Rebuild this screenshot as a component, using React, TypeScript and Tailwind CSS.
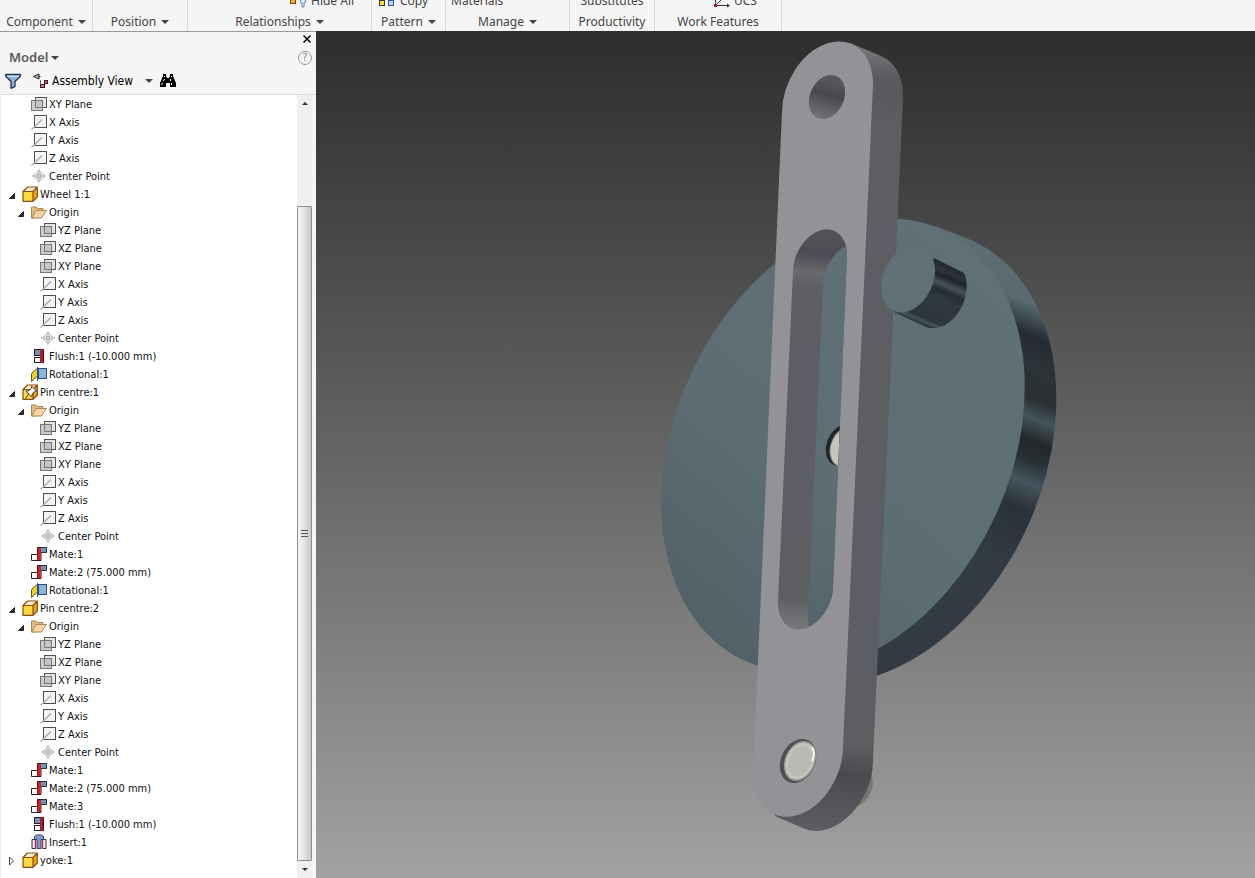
import React, { useState } from 'react';

type IconName = 'plane' | 'axis' | 'point' | 'part' | 'pinned' | 'folder' | 'flush' | 'rotational' | 'mate' | 'insert';

type Node = {
  icon: IconName;
  label: string;
  level: 1 | 2 | 3;
  state?: 'open' | 'closed';
};

const originNodes: Node[] = [
  { icon: 'plane', label: 'YZ Plane', level: 3 },
  { icon: 'plane', label: 'XZ Plane', level: 3 },
  { icon: 'plane', label: 'XY Plane', level: 3 },
  { icon: 'axis', label: 'X Axis', level: 3 },
  { icon: 'axis', label: 'Y Axis', level: 3 },
  { icon: 'axis', label: 'Z Axis', level: 3 },
  { icon: 'point', label: 'Center Point', level: 3 },
];

const nodes: Node[] = [
  { icon: 'plane', label: 'XY Plane', level: 2 },
  { icon: 'axis', label: 'X Axis', level: 2 },
  { icon: 'axis', label: 'Y Axis', level: 2 },
  { icon: 'axis', label: 'Z Axis', level: 2 },
  { icon: 'point', label: 'Center Point', level: 2 },
  { icon: 'part', label: 'Wheel 1:1', level: 1, state: 'open' },
  { icon: 'folder', label: 'Origin', level: 2, state: 'open' },
  ...originNodes,
  { icon: 'flush', label: 'Flush:1 (-10.000 mm)', level: 2 },
  { icon: 'rotational', label: 'Rotational:1', level: 2 },
  { icon: 'pinned', label: 'Pin centre:1', level: 1, state: 'open' },
  { icon: 'folder', label: 'Origin', level: 2, state: 'open' },
  ...originNodes,
  { icon: 'mate', label: 'Mate:1', level: 2 },
  { icon: 'mate', label: 'Mate:2 (75.000 mm)', level: 2 },
  { icon: 'rotational', label: 'Rotational:1', level: 2 },
  { icon: 'part', label: 'Pin centre:2', level: 1, state: 'open' },
  { icon: 'folder', label: 'Origin', level: 2, state: 'open' },
  ...originNodes,
  { icon: 'mate', label: 'Mate:1', level: 2 },
  { icon: 'mate', label: 'Mate:2 (75.000 mm)', level: 2 },
  { icon: 'mate', label: 'Mate:3', level: 2 },
  { icon: 'flush', label: 'Flush:1 (-10.000 mm)', level: 2 },
  { icon: 'insert', label: 'Insert:1', level: 2 },
  { icon: 'part', label: 'yoke:1', level: 1, state: 'closed' },
];

const indent = { 1: 'pl-[7px]', 2: 'pl-4', 3: 'pl-[25px]' };

function Cube() {
  return (
    <>
      <path d="M1 5.5 5.5 1h9.8v10L11 15.3H1z" fill="#e8a818" />
      <path d="M1 5.5 5.5 1h9.8L11 5.5z" fill="#fff3cf" />
      <rect x="1" y="5.5" width="10" height="9.8" fill="#fbd93f" />
      <path d="M1 5.5 5.5 1h9.8v10L11 15.3H1zM1 5.5h10M11 5.5v9.8M11 5.5 15.3 1" fill="none" stroke="#8a4a10" strokeWidth="1.2" strokeLinejoin="round" />
    </>
  );
}

function TreeIcon({ name }: { name: IconName }) {
  return (
    <svg viewBox="0 0 16 16" className="h-4 w-4 shrink-0" aria-hidden="true">
      {name === 'plane' && (
        <>
          <rect x="4.5" y="1.5" width="11" height="10" fill="#e4e4e4" stroke="#555" />
          <rect x="0.5" y="4.5" width="11" height="10" fill="#bdbdbd" fillOpacity="0.8" stroke="#777" />
          <path d="M4.5 4.5v7h7" fill="none" stroke="#777" />
        </>
      )}
      {name === 'axis' && (
        <>
          <rect x="3.5" y="1.5" width="12" height="12" fill="#f4f4f4" stroke="#4e4e4e" />
          <path d="M0.5 15.5 11 5.5" stroke="#aaa" strokeWidth="1.3" />
        </>
      )}
      {name === 'point' && (
        <>
          <path d="M8 2.5 13.5 8 8 13.5 2.5 8z" fill="#f3f3f3" stroke="#a3a3a3" />
          <path d="M8 1v4M8 11v4M1 8h4M11 8h4" stroke="#b5b5b5" />
          <circle cx="8" cy="8" r="2" fill="#ddd" stroke="#8d8d8d" />
        </>
      )}
      {name === 'part' && <Cube />}
      {name === 'pinned' && (
        <>
          <Cube />
          <path d="m3.5 14.5 3-4.5M4 7l5.5 6 1-3.5 3-2.5 1.5.3L9.5 2l.2 2L7 6.6z" fill="#f2f2f2" stroke="#444" strokeLinejoin="round" />
        </>
      )}
      {name === 'folder' && (
        <>
          <path d="M0.5 14V3h4.5l1.5 1.5H12V7L4 14z" fill="#e3bd80" stroke="#a98750" strokeLinejoin="round" />
          <path d="M0.8 14 5 6.5h10.5L10.5 14z" fill="#efd6a4" stroke="#a98750" strokeLinejoin="round" />
        </>
      )}
      {name === 'flush' && (
        <>
          <rect x="3.5" y="1.5" width="9" height="6" fill="#6c93bd" stroke="#222" />
          <rect x="3.5" y="9.5" width="7" height="5" fill="#fff" stroke="#222" />
          <path d="M9 1h3v14H9z" fill="#c41425" />
          <path d="M12.5 1v14" stroke="#222" />
        </>
      )}
      {name === 'rotational' && (
        <>
          <path d="M0.5 15.5v-8L6.5 2v8z" fill="#f7cf28" stroke="#70540a" />
          <rect x="7.5" y="2.5" width="8" height="10" fill="#8fb4e3" stroke="#294c82" />
          <path d="M6.5 1v14" stroke="#294c82" />
        </>
      )}
      {name === 'mate' && (
        <>
          <path d="M0.5 8.5h6v6h-6z" fill="#fff" stroke="#222" />
          <rect x="9" y="1.5" width="6.5" height="5" fill="#6c93bd" stroke="#333" />
          <path d="M6.5 1.5h3v13h-3z" fill="#ee1418" />
          <path d="M10 7v7.5H6M6.5 9V1.5H10" fill="none" stroke="#3b1113" />
        </>
      )}
      {name === 'insert' && (
        <>
          <path d="M1 5.5h3.5v9H1zM11.5 5.5H15v9h-3.5z" fill="#e8ebf0" stroke="#333" />
          <path d="M3.5 5.5v-3l2-1.5h5l2 1.5v3H10v9H6v-9z" fill="#7d9bcb" stroke="#34456b" />
          <path d="M4.5 6v8.5M11.5 6v8.5" stroke="#d61f2c" strokeWidth="1.3" />
        </>
      )}
    </svg>
  );
}

function Caret() {
  return (
    <svg viewBox="0 0 8 4" className="h-1 w-2 shrink-0" aria-hidden="true">
      <path d="M0 0h8L4 4z" fill="#444" />
    </svg>
  );
}

function RibbonPanel({ width, title, caret, pad, children }: { width: string; title: string; caret?: boolean; pad?: string; children?: React.ReactNode }) {
  return (
    <section className={`${width} flex h-10 shrink-0 flex-col border-r border-[#d9d9d9]`}>
      <div className={`${pad ?? ''} flex h-5 items-center gap-1`}>{children}</div>
      {caret ? (
        <button className="flex h-5 items-center justify-center gap-[5px] pt-[2px] whitespace-nowrap">
          {title}
          <Caret />
        </button>
      ) : (
        <h2 className="flex h-5 items-center justify-center pt-[2px] whitespace-nowrap">{title}</h2>
      )}
    </section>
  );
}

function Ribbon() {
  return (
    <header className="flex h-[31px] items-end overflow-hidden bg-[#f5f5f5] font-['Noto_Sans',sans-serif] text-xs text-[#444]">
      <RibbonPanel width="w-[93px]" title="Component" caret />
      <RibbonPanel width="w-[95px]" title="Position" caret />
      <RibbonPanel width="w-[184px]" title="Relationships" caret pad="pl-[101px]">
        <button className="flex items-center gap-1 whitespace-nowrap">
          <svg viewBox="0 0 18 18" className="h-[18px] w-[18px]" aria-hidden="true">
            <rect x="1.5" y="6.5" width="5" height="5" fill="#f0b81c" stroke="#7a3d10" />
            <path d="M11 7h6l-1 4h-1v4h-2v-4h-1z" fill="#dbe8fa" stroke="#5d86bd" />
          </svg>
          Hide All
        </button>
      </RibbonPanel>
      <RibbonPanel width="w-[74px]" title="Pattern" caret pad="pl-[6px]">
        <button className="flex items-center gap-1 whitespace-nowrap">
          <svg viewBox="0 0 18 18" className="h-[18px] w-[18px]" aria-hidden="true">
            <rect x="1.5" y="8.5" width="5" height="5" fill="#f3dc3d" stroke="#333" />
            <rect x="10.5" y="8.5" width="5" height="5" fill="#b9d3f8" stroke="#2e55a5" />
          </svg>
          Copy
        </button>
      </RibbonPanel>
      <RibbonPanel width="w-[124px]" title="Manage" caret pad="pl-[5px]">
        <button>Materials</button>
      </RibbonPanel>
      <RibbonPanel width="w-[85px]" title="Productivity" pad="justify-center">
        <button>Substitutes</button>
      </RibbonPanel>
      <RibbonPanel width="w-[127px]" title="Work Features" pad="pl-[57px]">
        <button className="flex items-center gap-1">
          <svg viewBox="0 0 18 18" className="h-[18px] w-[18px]" aria-hidden="true">
            <path d="M3.5 14V1M3.5 13.5H16M3.5 13.5 11 6" fill="none" stroke="#333" />
            <path d="M15 11.5v4l3-2z" fill="#333" />
            <rect x="2" y="12" width="3" height="3" fill="#c8102e" />
          </svg>
          UCS
        </button>
      </RibbonPanel>
    </header>
  );
}

function PanelHeader() {
  const [view, setView] = useState('Assembly View');

  return (
    <div>
      <div className="flex h-[14px] items-center justify-end pr-[5px]">
        <button aria-label="Close">
          <svg viewBox="0 0 8 8" className="h-2 w-2" aria-hidden="true">
            <path d="m.5.5 7 7m0-7-7 7" stroke="#000" strokeWidth="1.5" />
          </svg>
        </button>
      </div>
      <div className="flex h-[22px] items-center justify-between pt-[2px] pr-1 pl-[9px]">
        <button className="flex items-center gap-[2px] font-['Noto_Sans',sans-serif] text-[13px] font-semibold text-[#5a5a5a]">
          Model
          <Caret />
        </button>
        <button aria-label="Help" className="flex h-[14px] w-[14px] items-center justify-center rounded-full border border-[#999] text-[11px] text-[#888]">
          ?
        </button>
      </div>
      <div className="flex h-[26px] items-center pl-[5px]">
        <button aria-label="Filter">
          <svg viewBox="0 0 16 16" className="h-4 w-4" aria-hidden="true">
            <path d="M.7 1.5h14.6v1.7L10 8.5v4.8l-4 2V8.5L.7 3.2z" fill="#8fb2dc" stroke="#1e3148" strokeWidth="1.3" strokeLinejoin="round" />
            <path d="M2 3.2h12" stroke="#e2effb" />
          </svg>
        </button>
        <svg viewBox="0 0 16 16" className="ml-3 h-4 w-4" aria-hidden="true">
          <path d="M.5 3.5 6 1v5zM6 3.5h1.5" fill="#bbb" stroke="#222" />
          <path d="M7.5 7.5v7M7.5 12.5h2" fill="none" stroke="#222" strokeDasharray="2 1" />
          <rect x="11.5" y="7.5" width="3" height="3" fill="#e26476" stroke="#3b1520" />
          <rect x="7.5" y="11.5" width="4" height="3" fill="#e26476" stroke="#3b1520" />
        </svg>
        <select
          aria-label="Browser view"
          value={view}
          onChange={(e) => setView(e.target.value)}
          className="ml-[3px] w-[93px] appearance-none bg-transparent text-xs text-black"
        >
          <option>Assembly View</option>
          <option>Modeling View</option>
        </select>
        <Caret />
        <button aria-label="Find" className="ml-[7px]">
          <svg viewBox="0 0 16 14" className="h-[14px] w-4" aria-hidden="true">
            <path d="M3 0h3v2l1 2h2l1-2V0h3v2l3 7v4h-6V9H6v4H0V9l3-7z" fill="#000" />
            <path d="M4.5 2v1M11.5 2v1M2 9v2M11.5 9v2M4.5 5 3.5 7M10.5 5v2" stroke="#fff" />
          </svg>
        </button>
      </div>
    </div>
  );
}

function Tree() {
  return (
    <ul role="tree" aria-label="Model browser" className="min-w-0 flex-1 bg-white text-[11px] text-[#111]">
      {nodes.map((node, i) => (
        <li key={i} role="treeitem" aria-level={node.level} className={`${indent[node.level]} flex h-[18px] items-center whitespace-nowrap`}>
          <span className="flex w-[14px] shrink-0 pt-[2px]">
            {node.state && (
              <button aria-label={node.state === 'open' ? 'Collapse' : 'Expand'}>
                <svg viewBox="0 0 8 10" className="h-[10px] w-2" aria-hidden="true">
                  {node.state === 'open' ? <path d="M1.5 8.5h5v-5z" fill="#333" stroke="#222" /> : <path d="M1.5 1v8l4-4z" fill="#fff" stroke="#444" />}
                </svg>
              </button>
            )}
          </span>
          <TreeIcon name={node.icon} />
          <span className="pt-[2px] pl-[2px]">{node.label}</span>
        </li>
      ))}
    </ul>
  );
}

function Scrollbar() {
  return (
    <div className="mr-1 flex w-[15px] shrink-0 flex-col bg-[#efefef]">
      <button aria-label="Scroll up" className="flex h-[17px] items-center justify-center">
        <svg viewBox="0 0 6 3" className="h-[3px] w-[6px]" aria-hidden="true">
          <path d="M0 3h6L3 0z" fill="#333" />
        </svg>
      </button>
      <div className="h-[12%]" />
      <div className="flex flex-1 items-center justify-center rounded-[1px] border border-[#8e8e8e] bg-gradient-to-r from-[#f6f6f6] via-[#e2e2e4] to-[#c6c7cb]">
        <svg viewBox="0 0 7 9" className="h-[9px] w-[7px]" aria-hidden="true">
          <path d="M0 1.5h7M0 4.5h7M0 7.5h7" stroke="#555" />
        </svg>
      </div>
      <button aria-label="Scroll down" className="flex h-[17px] items-center justify-center">
        <svg viewBox="0 0 6 3" className="h-[3px] w-[6px]" aria-hidden="true">
          <path d="M0 0h6L3 3z" fill="#333" />
        </svg>
      </button>
    </div>
  );
}

const slot = 'M793 271A24 34 24.5 0 1 847 255L833 588A24 34 24.5 0 1 778 602Z';

function Viewport() {
  return (
    <main className="relative min-w-0 flex-1 bg-gradient-to-b from-[#2e2e2e] to-[#a2a2a2]">
      <svg viewBox="316 31 939 847" preserveAspectRatio="xMidYMid slice" className="absolute inset-0 h-full w-full" role="img" aria-label="Crank wheel and slotted link">
        <defs>
          <linearGradient id="face" gradientUnits="userSpaceOnUse" x1="900" y1="230" x2="770" y2="670">
            <stop offset="0" stopColor="#5f7077" />
            <stop offset="0.6" stopColor="#5d6d74" />
            <stop offset="1" stopColor="#526168" />
          </linearGradient>
          <linearGradient id="rim" gradientUnits="userSpaceOnUse" x1="1040" y1="226" x2="880" y2="639">
            <stop offset="0" stopColor="#5f7077" />
            <stop offset="0.17" stopColor="#596a71" />
            <stop offset="0.24" stopColor="#252b30" />
            <stop offset="0.3" stopColor="#2c3439" />
            <stop offset="0.37" stopColor="#2a3033" />
            <stop offset="0.41" stopColor="#44545c" />
            <stop offset="0.46" stopColor="#22282b" />
            <stop offset="0.5" stopColor="#293034" />
            <stop offset="0.55" stopColor="#44555d" />
            <stop offset="0.61" stopColor="#293238" />
            <stop offset="0.75" stopColor="#333b44" />
            <stop offset="1" stopColor="#323b43" />
          </linearGradient>
          <linearGradient id="side" gradientUnits="userSpaceOnUse" x1="868" y1="50" x2="842" y2="830">
            <stop offset="0" stopColor="#757479" />
            <stop offset="0.035" stopColor="#5b5a5f" />
            <stop offset="0.06" stopColor="#59595d" />
            <stop offset="0.09" stopColor="#5d5e62" />
            <stop offset="0.89" stopColor="#5d5e62" />
            <stop offset="0.93" stopColor="#4b4a4e" />
            <stop offset="1" stopColor="#5d5c61" />
          </linearGradient>
          <linearGradient id="slotWall" gradientUnits="userSpaceOnUse" x1="835" y1="235" x2="795" y2="630">
            <stop offset="0" stopColor="#535256" />
            <stop offset="0.05" stopColor="#4d4c50" />
            <stop offset="0.1" stopColor="#69686d" />
            <stop offset="0.14" stopColor="#5e5e63" />
            <stop offset="0.92" stopColor="#5e5f63" />
            <stop offset="1" stopColor="#7a797e" />
          </linearGradient>
          <linearGradient id="hole" x1="0.4" y1="0" x2="0.5" y2="1">
            <stop offset="0" stopColor="#5c5b60" />
            <stop offset="0.45" stopColor="#49484c" />
            <stop offset="1" stopColor="#747378" />
          </linearGradient>
          <linearGradient id="crank" gradientUnits="userSpaceOnUse" x1="952" y1="264" x2="926" y2="326">
            <stop offset="0" stopColor="#20262a" />
            <stop offset="0.15" stopColor="#2c343a" />
            <stop offset="0.22" stopColor="#1f2529" />
            <stop offset="0.33" stopColor="#46515a" />
            <stop offset="0.42" stopColor="#252c31" />
            <stop offset="0.55" stopColor="#303940" />
            <stop offset="0.9" stopColor="#2d363e" />
            <stop offset="0.95" stopColor="#46525a" />
            <stop offset="1" stopColor="#2a3238" />
          </linearGradient>
          <radialGradient id="pin">
            <stop offset="0.7" stopColor="#b8b9b0" />
            <stop offset="0.85" stopColor="#c9cac2" />
            <stop offset="1" stopColor="#85857f" />
          </radialGradient>
          <clipPath id="slotClip">
            <path d={slot} />
          </clipPath>
        </defs>

        {/* Wheel */}
        <path d="M935 226L966 238A166 234 24.5 0 1 782 676L762 664Z" fill="url(#rim)" />
        <ellipse cx="843" cy="445" rx="168" ry="237" transform="rotate(24.5 843 445)" fill="url(#face)" />

        {/* Link */}
        <ellipse cx="857" cy="787" rx="15" ry="21" transform="rotate(24.5 857 787)" fill="#77766f" stroke="#8f8e88" />
        <path d="M850 43L881 56A42 59 24.5 0 1 903 97L873 760A42 59 24.5 0 1 805 829L775 816Z" fill="url(#side)" />
        <path d="M782 112A40 56 24.5 0 1 873 84L843 747A40 56 24.5 0 1 753 775Z" fill="#939297" />
        <ellipse cx="827" cy="97" rx="17" ry="23" transform="rotate(24.5 827 97)" fill="url(#hole)" />

        {/* Slot, with the wheel and its hub showing through */}
        <path d={slot} fill="url(#slotWall)" />
        <g clipPath="url(#slotClip)">
          <path d={slot} transform="translate(30 14)" fill="url(#face)" />
          <ellipse cx="843" cy="445" rx="16" ry="22" transform="rotate(24.5 843 445)" fill="#20272a" />
          <ellipse cx="847" cy="447" rx="16" ry="21" transform="rotate(24.5 847 447)" fill="#c6c6bf" stroke="#8e8e87" />
        </g>

        {/* Lower pin */}
        <ellipse cx="798" cy="761" rx="17" ry="23" transform="rotate(24.5 798 761)" fill="#504f52" />
        <ellipse cx="800" cy="761" rx="15" ry="21" transform="rotate(24.5 800 761)" fill="url(#pin)" />
        <path d="M812 747q4 5 0 14" fill="none" stroke="#f2f2ee" strokeWidth="2" />

        {/* Crank pin */}
        <path d="M934 258L964 273A25 35 24.5 0 1 924 326L894 312Z" fill="url(#crank)" />
        <ellipse cx="908" cy="279" rx="25" ry="35" transform="rotate(24.5 908 279)" fill="#5f7077" />
      </svg>
    </main>
  );
}

export default function App() {
  return (
    <div className="flex min-h-screen flex-col overflow-hidden bg-[#f5f5f5]">
      <Ribbon />
      <div className="flex flex-1">
        <aside className="flex w-[316px] shrink-0 flex-col border-t border-[#9a9a9a] bg-[#f5f5f5] font-['DejaVu_Sans_Condensed','Noto_Sans',sans-serif]">
          <PanelHeader />
          <div className="flex flex-1 border-t border-l border-t-[#dcdcdc] border-l-[#ececec]">
            <Tree />
            <Scrollbar />
          </div>
        </aside>
        <Viewport />
      </div>
    </div>
  );
}
